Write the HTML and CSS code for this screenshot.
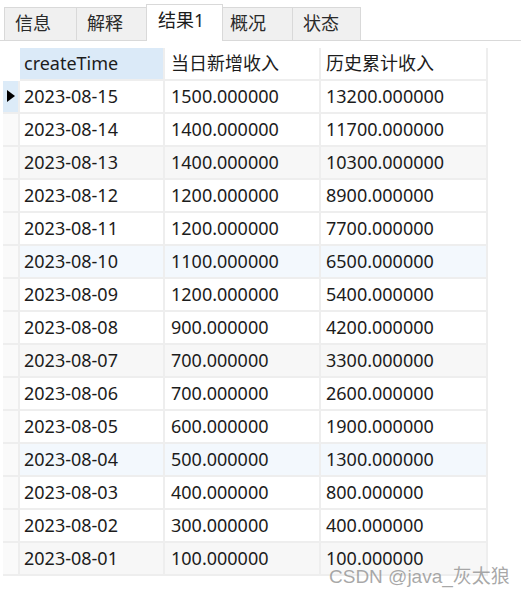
FILE: index.html
```html
<!DOCTYPE html>
<html lang="zh-CN">
<head>
<meta charset="utf-8">
<title>结果1</title>
<link rel="stylesheet" href="styles.css">
</head>
<body>
<div class="page">
  <div class="tabs">
    <div class="tab t1">信息</div>
    <div class="tab t2">解释</div>
    <div class="tab active t3">结果1</div>
    <div class="tab t4">概况</div>
    <div class="tab t5">状态</div>
  </div>
  <div class="grid">
    <div class="row head">
      <div class="gut"></div>
      <div class="cell c1 sel">createTime</div>
      <div class="cell c2">当日新增收入</div>
      <div class="cell c3">历史累计收入</div>
    </div>
    <div class="row"><div class="gut cur"><span class="arrow"></span></div><div class="cell c1">2023-08-15</div><div class="cell c2">1500.000000</div><div class="cell c3">13200.000000</div></div>
    <div class="row"><div class="gut"></div><div class="cell c1">2023-08-14</div><div class="cell c2">1400.000000</div><div class="cell c3">11700.000000</div></div>
    <div class="row gray"><div class="gut"></div><div class="cell c1">2023-08-13</div><div class="cell c2">1400.000000</div><div class="cell c3">10300.000000</div></div>
    <div class="row"><div class="gut"></div><div class="cell c1">2023-08-12</div><div class="cell c2">1200.000000</div><div class="cell c3">8900.000000</div></div>
    <div class="row"><div class="gut"></div><div class="cell c1">2023-08-11</div><div class="cell c2">1200.000000</div><div class="cell c3">7700.000000</div></div>
    <div class="row blue"><div class="gut"></div><div class="cell c1">2023-08-10</div><div class="cell c2">1100.000000</div><div class="cell c3">6500.000000</div></div>
    <div class="row"><div class="gut"></div><div class="cell c1">2023-08-09</div><div class="cell c2">1200.000000</div><div class="cell c3">5400.000000</div></div>
    <div class="row"><div class="gut"></div><div class="cell c1">2023-08-08</div><div class="cell c2">900.000000</div><div class="cell c3">4200.000000</div></div>
    <div class="row gray"><div class="gut"></div><div class="cell c1">2023-08-07</div><div class="cell c2">700.000000</div><div class="cell c3">3300.000000</div></div>
    <div class="row"><div class="gut"></div><div class="cell c1">2023-08-06</div><div class="cell c2">700.000000</div><div class="cell c3">2600.000000</div></div>
    <div class="row"><div class="gut"></div><div class="cell c1">2023-08-05</div><div class="cell c2">600.000000</div><div class="cell c3">1900.000000</div></div>
    <div class="row blue"><div class="gut"></div><div class="cell c1">2023-08-04</div><div class="cell c2">500.000000</div><div class="cell c3">1300.000000</div></div>
    <div class="row"><div class="gut"></div><div class="cell c1">2023-08-03</div><div class="cell c2">400.000000</div><div class="cell c3">800.000000</div></div>
    <div class="row"><div class="gut"></div><div class="cell c1">2023-08-02</div><div class="cell c2">300.000000</div><div class="cell c3">400.000000</div></div>
    <div class="row gray"><div class="gut"></div><div class="cell c1">2023-08-01</div><div class="cell c2">100.000000</div><div class="cell c3">100.000000</div></div>
  </div>
  <div class="watermark">CSDN @java_灰太狼</div>
</div>
</body>
</html>
```
FILE: styles.css
```css
* { box-sizing: border-box; }
html, body { margin: 0; padding: 0; background: #fff; }
body {
  font-family: "Noto Sans", "Noto Sans CJK SC", sans-serif;
  font-size: 18px;
  color: #1c1c1c;
}
.page { position: relative; width: 521px; height: 594px; overflow: hidden; }

.tabs {
  display: flex;
  align-items: flex-end;
  height: 41px;
  padding-left: 4px;
  border-bottom: 1px solid #d9d9d9;
}
.tab {
  height: 33px;
  padding-left: 10px;
  line-height: 31px;
  background: #f0f0f0;
  border: 1px solid #d9d9d9;
  border-bottom: none;
  margin-right: -1px;
  color: #2a2a2a;
  white-space: nowrap;
}
.t1 { width: 73px; }
.t2 { width: 71px; }
.t3 { width: 77px; }
.t4 { width: 71px; padding-left: 7px; }
.t5 { width: 69px; }
.tab.active {
  position: relative;
  height: 37px;
  margin-bottom: -1px;
  background: #fff;
  padding-left: 11px;
  line-height: 31px;
  z-index: 1;
  color: #1c1c1c;
}

.grid { margin-top: 7px; margin-left: 3px; }
.row { display: flex; height: 33px; }
.gut {
  width: 17px;
  height: 33px;
  border-bottom: 2px solid #eeeeee;
  border-right: 2px solid #eeeeee;
  background: #fafafa;
  position: relative;
}
.head .gut { background: #fff; border-color: #fff; border-right-color: #fff; }
.gut.cur { background: #dcebf8; }
.arrow {
  position: absolute;
  left: 4px;
  top: 9px;
  width: 0; height: 0;
  border-top: 6.5px solid transparent;
  border-bottom: 6.5px solid transparent;
  border-left: 8px solid #000;
}
.cell {
  height: 33px;
  line-height: 31px;
  padding-left: 4px;
  border-bottom: 2px solid #eeeeee;
  border-right: 2px solid #eeeeee;
  white-space: nowrap;
  overflow: hidden;
}
.c1 { width: 145px; }
.c2 { width: 156px; padding-left: 6px; }
.c3 { width: 167px; padding-left: 5px; }
.head .cell { background: #fff; }
.head .cell.sel { background: #dbeaf8; }
.row.gray .cell { background: #f7f7f7; }
.row.blue .cell { background: #f3f8fd; }

.watermark {
  position: absolute;
  left: 329px;
  top: 561px;
  font-family: "Liberation Sans", "Noto Sans CJK SC", sans-serif;
  font-size: 19px;
  color: rgba(140, 140, 140, 0.75);
  white-space: nowrap;
}
```
